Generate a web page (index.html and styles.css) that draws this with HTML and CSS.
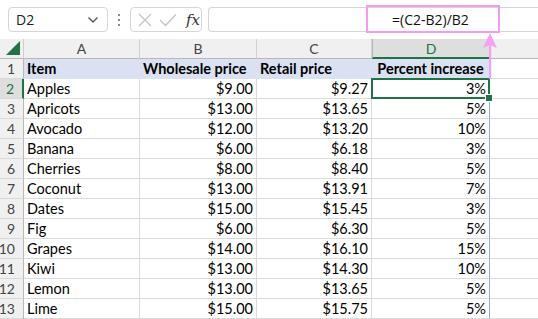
FILE: index.html
```html
<!DOCTYPE html>
<html>
<head>
<meta charset="utf-8">
<link rel="stylesheet" href="styles.css">
</head>
<body>
<div class="app">
  <div class="fbar">
    <div class="namebox"><span>D2</span>
      <svg class="chev" width="12" height="8" viewBox="0 0 12 8"><path d="M1.5 1.5 L6 6 L10.5 1.5" fill="none" stroke="#555" stroke-width="1.3"/></svg>
    </div>
    <div class="dots"><i></i><i></i><i></i></div>
    <div class="btns">
      <svg width="18" height="18" viewBox="0 0 18 18"><path d="M3 3 L15 15 M15 3 L3 15" stroke="#c4c4c4" stroke-width="1.3" fill="none"/></svg>
      <svg width="20" height="18" viewBox="0 0 20 18"><path d="M2 9 L7.5 14.5 L18 3.5" stroke="#c4c4c4" stroke-width="1.3" fill="none"/></svg>
      <span class="fx">fx</span>
    </div>
    <div class="finput"><div class="formula">=(C2-B2)/B2</div></div>
  </div>
  <div class="sheet">
    <div class="corner"><span class="tri"></span></div>
    <div class="ch">A</div><div class="ch">B</div><div class="ch">C</div><div class="ch sel">D</div><div class="ch last"></div>

    <div class="rh">1</div>
    <div class="c hd">Item</div><div class="c hd">Wholesale price</div><div class="c hd">Retail price</div><div class="c hd ctr">Percent increase</div><div class="c e"></div>

    <div class="rh sel">2</div>
    <div class="c">Apples</div><div class="c r">$9.00</div><div class="c r">$9.27</div><div class="c r dsel">3%</div><div class="c e"></div>

    <div class="rh">3</div>
    <div class="c">Apricots</div><div class="c r">$13.00</div><div class="c r">$13.65</div><div class="c r d">5%</div><div class="c e"></div>

    <div class="rh">4</div>
    <div class="c">Avocado</div><div class="c r">$12.00</div><div class="c r">$13.20</div><div class="c r d">10%</div><div class="c e"></div>

    <div class="rh">5</div>
    <div class="c">Banana</div><div class="c r">$6.00</div><div class="c r">$6.18</div><div class="c r d">3%</div><div class="c e"></div>

    <div class="rh">6</div>
    <div class="c">Cherries</div><div class="c r">$8.00</div><div class="c r">$8.40</div><div class="c r d">5%</div><div class="c e"></div>

    <div class="rh">7</div>
    <div class="c">Coconut</div><div class="c r">$13.00</div><div class="c r">$13.91</div><div class="c r d">7%</div><div class="c e"></div>

    <div class="rh">8</div>
    <div class="c">Dates</div><div class="c r">$15.00</div><div class="c r">$15.45</div><div class="c r d">3%</div><div class="c e"></div>

    <div class="rh">9</div>
    <div class="c">Fig</div><div class="c r">$6.00</div><div class="c r">$6.30</div><div class="c r d">5%</div><div class="c e"></div>

    <div class="rh">10</div>
    <div class="c">Grapes</div><div class="c r">$14.00</div><div class="c r">$16.10</div><div class="c r d">15%</div><div class="c e"></div>

    <div class="rh">11</div>
    <div class="c">Kiwi</div><div class="c r">$13.00</div><div class="c r">$14.30</div><div class="c r d">10%</div><div class="c e"></div>

    <div class="rh">12</div>
    <div class="c">Lemon</div><div class="c r">$13.00</div><div class="c r">$13.65</div><div class="c r d">5%</div><div class="c e"></div>

    <div class="rh">13</div>
    <div class="c">Lime</div><div class="c r">$15.00</div><div class="c r">$15.75</div><div class="c r d">5%</div><div class="c e"></div>
  </div>
  <svg class="arrow" width="16" height="46" viewBox="0 0 16 46"><path d="M8 0 L15 15 L8 12 L1 15 Z" fill="#f6a0f2"/><rect x="7" y="10" width="2.2" height="36" fill="#f6a0f2"/></svg>
</div>
</body>
</html>
```

FILE: styles.css
```css
* { box-sizing: border-box; }
html, body { margin: 0; padding: 0; }
body { width: 538px; height: 319px; overflow: hidden; background: #fff; font-family: Lato, "Open Sans", sans-serif; }
.app { position: relative; width: 538px; height: 319px; overflow: hidden; }

.fbar { height: 39px; display: flex; align-items: flex-start; padding: 7px 0 0 8px; background: #fff; }
.namebox { width: 100px; height: 25px; border: 1px solid #d6d6d6; border-radius: 4px; display: flex; align-items: center; justify-content: space-between; padding: 0 8px 0 7px; font-family: "Segoe UI", "Open Sans", sans-serif; font-size: 14px; color: #222; }
.dots { width: 22px; height: 25px; display: flex; flex-direction: column; align-items: center; justify-content: center; gap: 3px; }
.dots i { display: block; width: 2px; height: 2px; background: #888; }
.btns { width: 72px; height: 25px; border: 1px solid #d6d6d6; border-radius: 4px; display: flex; align-items: center; gap: 4px; padding: 0 0 0 5px; }
.fx { font-family: "DejaVu Serif", "Liberation Serif", serif; font-style: italic; font-size: 15px; color: #333; margin-left: 4px; }
.finput { flex: 1; height: 25px; margin-left: 6px; border: 1px solid #d6d6d6; border-right: none; border-radius: 4px 0 0 4px; position: relative; }
.formula { position: absolute; left: 157px; top: -3px; width: 134px; height: 28px; border: 2px solid #f49cf0; font-family: "Open Sans", sans-serif; font-size: 14px; color: #111; display: flex; align-items: center; padding-left: 24px; }

.sheet { display: grid; grid-template-columns: 24px 116px 117px 115px 118px 48px; grid-template-rows: 20px repeat(13, 20px); font-size: 14.5px; color: #000; }
.corner { background: #f0f0f0; border-right: 1px solid #cfcfcf; border-bottom: 1px solid #b8b8b8; position: relative; }
.tri { position: absolute; right: 3px; bottom: 3px; width: 0; height: 0; border-left: 14px solid transparent; border-bottom: 14px solid #217346; }
.ch { background: #f0f0f0; border-right: 1px solid #d2d2d2; border-bottom: 1px solid #b8b8b8; display: flex; align-items: center; justify-content: center; font-size: 14px; color: #444; }
.ch.sel { background: #dedede; color: #217346; border-bottom: 2px solid #217346; border-left: 1px solid #b8b8b8; }
.ch.last { border-right: none; }
.rh { background: #f0f0f0; border-right: 1px solid #b8b8b8; border-bottom: 1px solid #d9d9d9; display: flex; align-items: center; justify-content: flex-end; padding-right: 8px; font-size: 14px; color: #444; }
.rh.sel { background: #dedede; color: #217346; border-right: 2px solid #217346; }
.c { border-right: 1px solid #dadada; border-bottom: 1px solid #dadada; display: flex; align-items: center; padding: 0 3px; white-space: nowrap; overflow: hidden; }
.c.r { justify-content: flex-end; }
.c.hd { background: #d9e1f2; font-weight: bold; border-right-color: #d9e1f2; border-bottom-color: #d9e1f2; overflow: visible; }
.c.hd.ctr { justify-content: center; }
.c.e { border-right: none; }
.c.d { border-right: 1px solid #8eaadb; }
.dsel { position: relative; overflow: visible; }
.dsel::after { content: ""; position: absolute; left: -1px; top: -1px; right: -1px; bottom: -1px; border: 2px solid #217346; }
.dsel::before { content: ""; position: absolute; right: -4px; bottom: -4px; width: 6px; height: 6px; background: #217346; border: 1px solid #fff; z-index: 2; }
.arrow { position: absolute; left: 482px; top: 33px; }
```
